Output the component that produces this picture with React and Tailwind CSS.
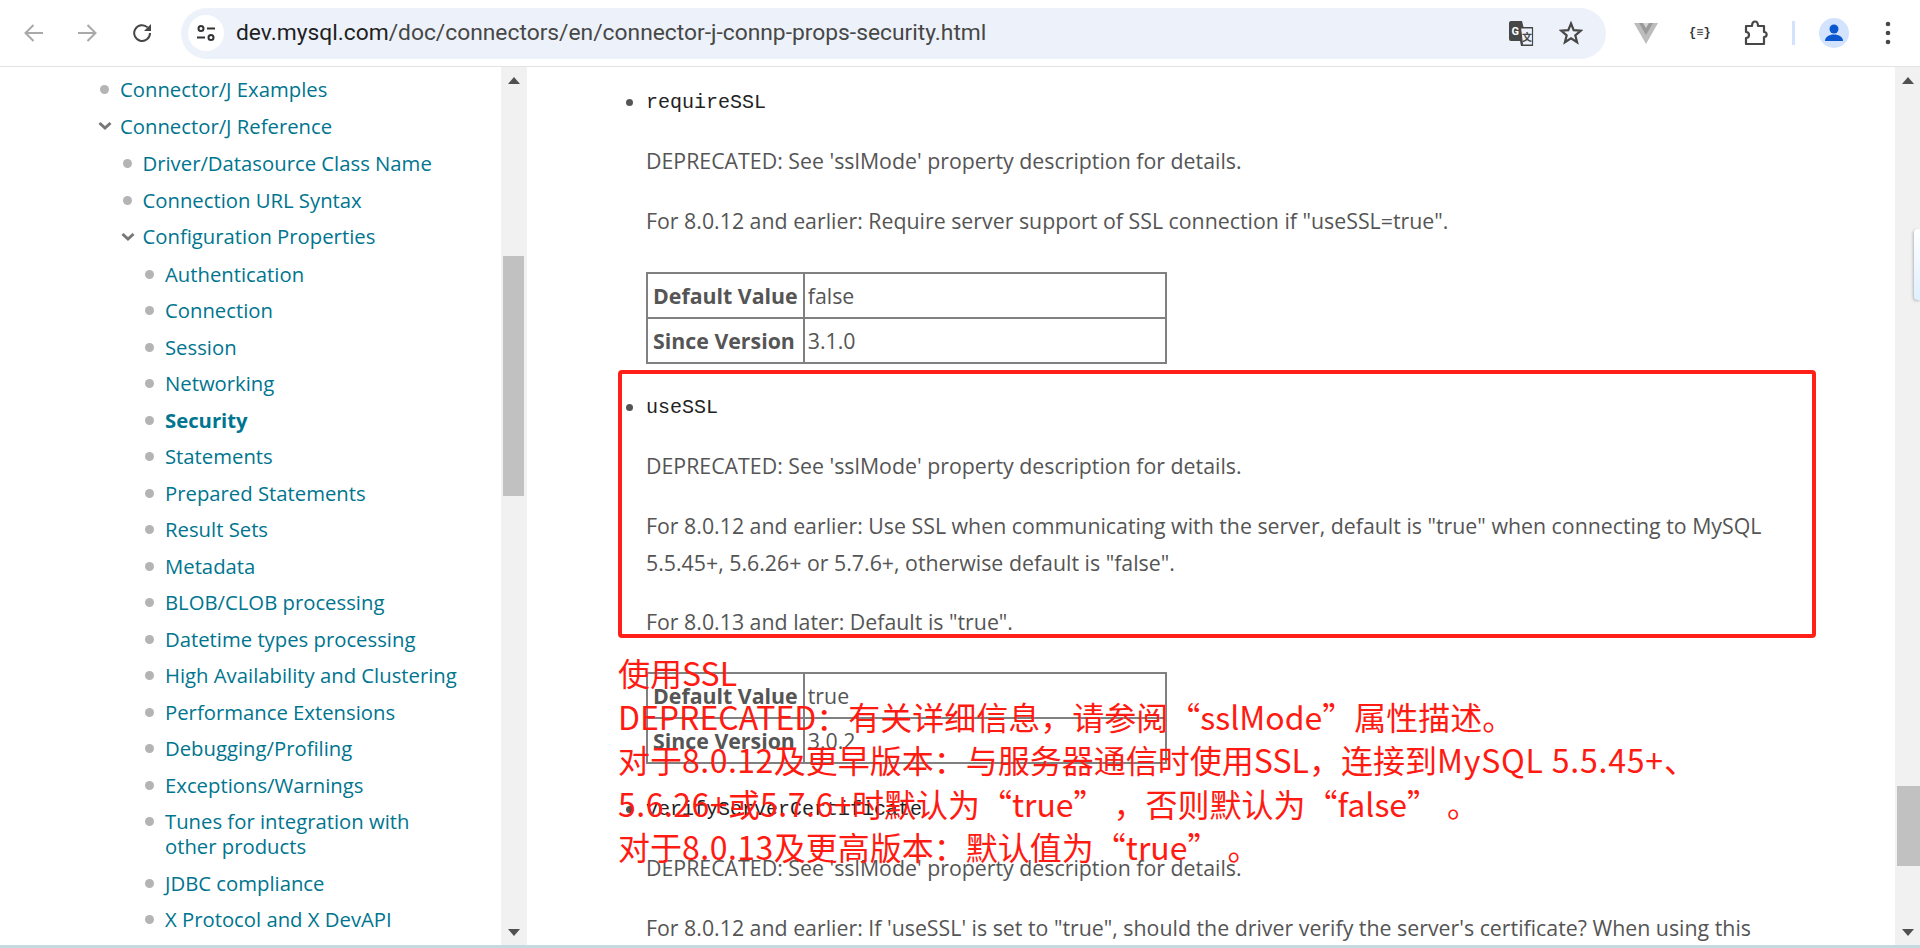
const nav = [
  { label: 'Connector/J Examples', level: 0 },
  { label: 'Connector/J Reference', level: 0, open: true },
  { label: 'Driver/Datasource Class Name', level: 1, gap: 'mt-[1px]' },
  { label: 'Connection URL Syntax', level: 1 },
  { label: 'Configuration Properties', level: 1, open: true },
  { label: 'Authentication', level: 2, gap: 'mt-[1px]' },
  { label: 'Connection', level: 2 },
  { label: 'Session', level: 2 },
  { label: 'Networking', level: 2 },
  { label: 'Security', level: 2, bold: true },
  { label: 'Statements', level: 2 },
  { label: 'Prepared Statements', level: 2 },
  { label: 'Result Sets', level: 2 },
  { label: 'Metadata', level: 2 },
  { label: 'BLOB/CLOB processing', level: 2 },
  { label: 'Datetime types processing', level: 2 },
  { label: 'High Availability and Clustering', level: 2 },
  { label: 'Performance Extensions', level: 2 },
  { label: 'Debugging/Profiling', level: 2 },
  { label: 'Exceptions/Warnings', level: 2 },
  { label: 'Tunes for integration with other products', level: 2 },
  { label: 'JDBC compliance', level: 2 },
  { label: 'X Protocol and X DevAPI', level: 2 },
]

const indent = { 0: 'pl-[120px]', 1: 'pl-[142.500px]', 2: 'pl-[165px]' }
const marker = { 0: 'left-[98px]', 1: 'left-[121px]', 2: 'left-[143px]' }

function NavItem({ item }) {
  return (
    <li className={`relative pb-[11.5px] ${indent[item.level]} ${item.gap || ''}`}>
      <span className={`absolute top-0 h-[25px] flex items-center ${marker[item.level]}`}>
        {item.open ? (
          <svg width="14" height="10" viewBox="0 0 14 10"><path d="M1.500 2 7 7l5.500-5" fill="none" stroke="#777" strokeWidth="3" /></svg>
        ) : (
          <span className="ml-[2px] block w-[9px] h-[9px] rounded-full bg-[#b4b4b4]" />
        )}
      </span>
      <a className={`block w-[296px] text-[#00758f] text-[20.300px] leading-[25px] ${item.bold ? 'font-bold' : ''}`}>{item.label}</a>
    </li>
  )
}

function Scrollbar({ thumbClass, className }) {
  return (
    <div className={`relative bg-[#f1f1f1] shrink-0 ${className}`}>
      <svg className="absolute top-[10px] left-1/2 -translate-x-1/2" width="12" height="7" viewBox="0 0 12 7"><path d="M6 0l6 7H0z" fill="#505050" /></svg>
      <div className={`absolute left-[2px] bg-[#c1c1c1] ${thumbClass}`} />
      <svg className="absolute bottom-[9px] left-1/2 -translate-x-1/2" width="12" height="7" viewBox="0 0 12 7"><path d="M6 7l6-7H0z" fill="#505050" /></svg>
    </div>
  )
}

function PropTable({ rows }) {
  return (
    <table className="border-collapse border-2 border-[#808080] w-[521px] leading-[25px]">
      <tbody>
        {rows.map(([k, v]) => (
          <tr key={k}>
            <td className="border-2 border-[#808080] font-bold px-[5px] h-[45px] w-[156px] whitespace-nowrap">{k}</td>
            <td className="border-2 border-[#808080] px-[3px]">{v}</td>
          </tr>
        ))}
      </tbody>
    </table>
  )
}

function Prop({ name, children }) {
  return (
    <li className="relative pl-[28px]">
      <span className="absolute left-[8px] top-[9px] w-[7px] h-[7px] rounded-full bg-[#555]" />
      <div className="font-['Liberation_Mono',monospace] text-[20px] leading-[25px] text-[#222]">{name}</div>
      {children}
    </li>
  )
}

function P({ first, children }) {
  return <p className={first ? 'mt-[27px]' : 'mt-[22.500px]'}>{children}</p>
}

function Gap() {
  return <span className="inline-block w-[8px]" />
}

export default function App() {
  return (
    <div className="relative h-[948px] w-[1920px] overflow-hidden bg-white flex flex-col font-['Open_Sans',sans-serif]">
      {/* Browser toolbar */}
      <div className="h-[67px] shrink-0 border-b border-[#e3e3e3] flex items-center pl-[24px]">
        <svg width="19" height="18" viewBox="0 0 19 18" fill="none" stroke="#a9a9a9" strokeWidth="2"><path d="M19 9H2M9.500 1 1.500 9l8 8" /></svg>
        <svg className="ml-[35px]" width="19" height="18" viewBox="0 0 19 18" fill="none" stroke="#a9a9a9" strokeWidth="2"><path d="M0 9h17M9.500 1l8 8-8 8" /></svg>
        <svg className="ml-[36px]" width="18" height="18" viewBox="0 0 18 18" fill="none">
          <path d="M14.600 3.400A7.900 7.900 0 1 0 17 9" stroke="#474747" strokeWidth="2" />
          <path d="M18 0v7h-7z" fill="#474747" />
        </svg>
        <div className="ml-[30px] w-[1425px] h-[51px] rounded-full bg-[#edf2fa] flex items-center pl-[7px] pr-[23px]">
          <div className="w-[36px] h-[36px] rounded-full bg-white flex items-center justify-center">
            <svg width="20" height="20" viewBox="0 0 20 20" fill="none" stroke="#333" strokeWidth="2">
              <circle cx="5" cy="5.500" r="2.500" />
              <path d="M11 5.500h8M1 14.500h8" />
              <circle cx="15" cy="14.500" r="2.500" />
            </svg>
          </div>
          <span className="ml-[12px] text-[22.800px] font-['Roboto',sans-serif] text-[#1f1f1f]">
            dev.mysql.com<span className="text-[#474747]">/doc/connectors/en/connector-j-connp-props-security.html</span>
          </span>
          <div className="ml-auto flex items-center">
            <svg width="25" height="25" viewBox="0 0 25 25">
              <path d="M2 0h11l1.500 6H24v19H12l-1-5H2a2 2 0 0 1-2-2V2a2 2 0 0 1 2-2z" fill="#474747" />
              <path d="M11.500 7h12v17h-10z" fill="#edf2fa" stroke="#474747" strokeWidth="1.200" />
              <text x="2.500" y="14" fontSize="11" fontWeight="700" fill="#fff" fontFamily="Roboto, sans-serif">G</text>
              <text x="13" y="20" fontSize="10" fontWeight="700" fill="#474747" fontFamily="'Noto Sans CJK SC', sans-serif">文</text>
            </svg>
            <svg className="ml-[25px]" width="24" height="24" viewBox="0 0 24 24" fill="none" stroke="#474747" strokeWidth="2.200">
              <polygon points="12,2.500 14.700,9.200 21.800,9.700 16.300,14.300 18.100,21.300 12,17.400 5.900,21.300 7.700,14.300 2.200,9.700 9.300,9.200" />
            </svg>
          </div>
        </div>
        <svg className="ml-[28px]" width="24" height="21" viewBox="0 0 24 21">
          <path d="M0 0h24L12 21z" fill="#bdbdbd" />
          <path d="M5 0h14l-7 12z" fill="#9a9a9a" />
          <path d="M9 0h6l-3 5z" fill="#d4d4d4" />
        </svg>
        <span className="ml-[31px] w-[20px] text-center text-[12px] font-bold text-[#333] font-['Liberation_Mono',monospace] whitespace-nowrap">{'{≡}'}</span>
        <svg className="ml-[35px]" width="24" height="26" viewBox="0 0 24 26" fill="none" stroke="#474747" strokeWidth="2.200" strokeLinejoin="round">
          <path d="M2 6h6c0-6 6-6 6 0h6v6c3.500 0 3.500 5 0 5v7H2v-6c4 0 4-6 0-6z" />
        </svg>
        <div className="ml-[24px] w-[3px] h-[24px] bg-[#d3e3fd]" />
        <div className="ml-[24px] w-[30px] h-[30px] rounded-full bg-[#d3e3fd] flex items-center justify-center overflow-hidden">
          <svg width="20" height="20" viewBox="0 0 20 20" fill="#0b57d0">
            <circle cx="10" cy="6" r="4.500" />
            <path d="M1 18c0-4 4-6.500 9-6.500s9 2.500 9 6.500z" />
          </svg>
        </div>
        <svg className="ml-[36px]" width="6" height="24" viewBox="0 0 6 24" fill="#474747">
          <circle cx="3" cy="3" r="2.300" /><circle cx="3" cy="12" r="2.300" /><circle cx="3" cy="21" r="2.300" />
        </svg>
      </div>

      <div className="flex-1 flex min-h-0">
        {/* Left nav */}
        <div className="w-[501px] shrink-0 overflow-hidden pt-[10px]">
          <ul>
            {nav.map(item => <NavItem key={item.label} item={item} />)}
          </ul>
        </div>
        <Scrollbar className="w-[26px]" thumbClass="right-[3px] top-[189px] h-[240px]" />

        {/* Doc content */}
        <div className="flex-1 relative overflow-hidden text-[21.330px] leading-[37px] text-[#555]">
          <ul className="pl-[91px] pr-[95px] pt-[23px]">
            <Prop name="requireSSL">
              <P first>DEPRECATED: See 'sslMode' property description for details.</P>
              <P>For 8.0.12 and earlier: Require server support of SSL connection if "useSSL=true".</P>
              <div className="mt-[33px]"><PropTable rows={[['Default Value', 'false'], ['Since Version', '3.1.0']]} /></div>
            </Prop>
            <div className="h-[31.500px]" />
            <Prop name="useSSL">
              <P first>DEPRECATED: See 'sslMode' property description for details.</P>
              <P>For 8.0.12 and earlier: Use SSL when communicating with the server, default is "true" when connecting to MySQL 5.5.45+, 5.6.26+ or 5.7.6+, otherwise default is "false".</P>
              <P>For 8.0.13 and later: Default is "true".</P>
              <div className="mt-[32px]"><PropTable rows={[['Default Value', 'true'], ['Since Version', '3.0.2']]} /></div>
            </Prop>
            <div className="h-[33px]" />
            <Prop name="verifyServerCertificate">
              <P first>DEPRECATED: See 'sslMode' property description for details.</P>
              <P>For 8.0.12 and earlier: If 'useSSL' is set to "true", should the driver verify the server's certificate? When using this</P>
            </Prop>
          </ul>

          {/* Red annotation over the page */}
          <div className="absolute left-[91px] top-[303px] w-[1198px] h-[268px] border-[4px] border-[#ff2018] rounded-[4px]" />
          <div lang="zh-CN" className="absolute left-[91px] top-[584px] whitespace-nowrap text-[#ff1a12] text-[32px] leading-[43.500px] font-['Noto_Sans_CJK_SC',sans-serif]">
            <div>使用SSL</div>
            <div>DEPRECATED：有关详细信息，请参阅“sslMode”属性描述。</div>
            <div>对于<span className="tracking-[0.500px]">8.0.12</span>及更早版本：与服务器通信时使用SSL，连接到<span className="tracking-[0.800px]">MySQL 5.5.45+</span>、</div>
            <div><span className="tracking-[0.500px]">5.6.26+</span>或<span className="tracking-[0.500px]">5.7.6+</span>时默认为“true”<Gap />，否则默认为“false”<Gap />。</div>
            <div>对于<span className="tracking-[0.500px]">8.0.13</span>及更高版本：默认值为“true”<Gap />。</div>
          </div>
        </div>
        <Scrollbar className="w-[25px]" thumbClass="right-0 top-[719px] h-[80px]" />
      </div>
      <div className="h-[3px] shrink-0 bg-[#c3dbe0]" />

      {/* Side panel tab peeking in at the right edge */}
      <div className="absolute right-0 top-[229px] w-[6px] h-[71px] rounded-l-[4px] bg-gradient-to-b from-white to-[#def0ff] shadow-[-1px_1px_3px_rgba(0,0,0,0.25)]" />
    </div>
  )
}
